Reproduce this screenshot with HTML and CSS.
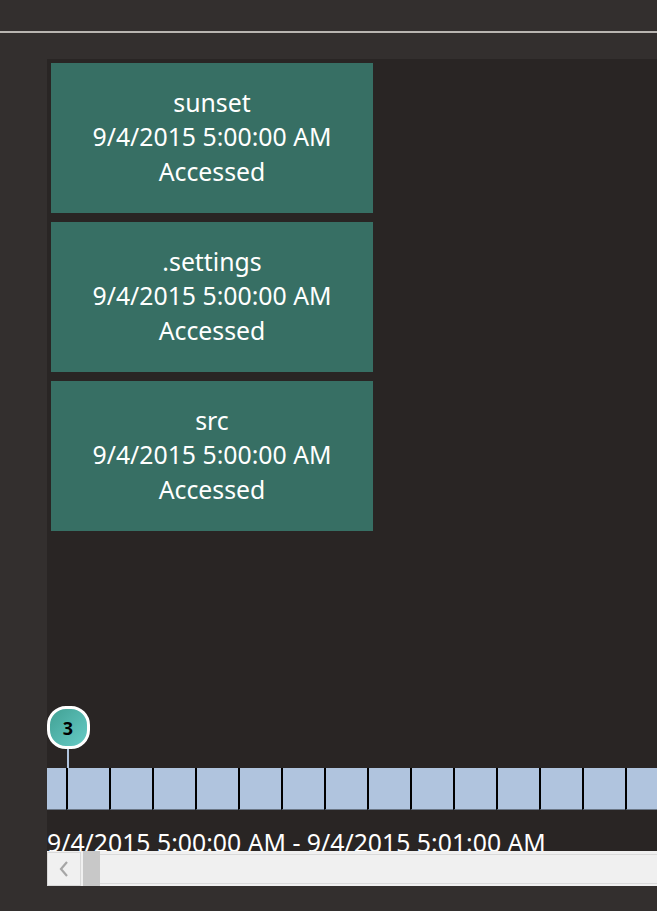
FILE: index.html
```html
<!DOCTYPE html>
<html>
<head>
<meta charset="utf-8">
<link rel="stylesheet" href="styles.css">
</head>
<body>
<div class="topbar"></div>
<div class="rule"></div>
<div class="panel">
  <div class="cards">
    <div class="card"><div>sunset</div><div>9/4/2015 5:00:00 AM</div><div>Accessed</div></div>
    <div class="card"><div>.settings</div><div>9/4/2015 5:00:00 AM</div><div>Accessed</div></div>
    <div class="card"><div>src</div><div>9/4/2015 5:00:00 AM</div><div>Accessed</div></div>
  </div>
  <div class="timeline">
    <div class="marker-wrap">
      <div class="marker"><span>3</span></div>
      <div class="stem"></div>
    </div>
    <div class="ticks">
      <div class="tick first"></div>
      <div class="tick"></div><div class="tick"></div><div class="tick"></div><div class="tick"></div>
      <div class="tick"></div><div class="tick"></div><div class="tick"></div><div class="tick"></div>
      <div class="tick"></div><div class="tick"></div><div class="tick"></div><div class="tick"></div>
      <div class="tick"></div><div class="tick"></div>
    </div>
    <div class="range">9/4/2015 5:00:00 AM - 9/4/2015 5:01:00 AM</div>
    <div class="scrollbar">
      <div class="sb-btn"><svg width="14" height="18" viewBox="0 0 14 18"><path d="M10 2 L4 9 L10 16" fill="none" stroke="#a6a6a6" stroke-width="2.2"/></svg></div>
      <div class="sb-thumb"></div>
      <div class="sb-track"></div>
    </div>
  </div>
</div>
</body>
</html>
```
FILE: styles.css
```css
html, body {
  margin: 0;
  padding: 0;
}
body {
  width: 657px;
  height: 911px;
  overflow: hidden;
  background: #332f2e;
  font-family: "Noto Sans", "Open Sans", sans-serif;
  color: #ffffff;
}
.topbar {
  height: 31px;
}
.rule {
  height: 2px;
  background: #b9b5b1;
}
.panel {
  margin-top: 26px;
  margin-left: 47px;
  height: 827px;
  background: #292524;
  display: flex;
  flex-direction: column;
  overflow: hidden;
}
.cards {
  display: flex;
  flex-direction: column;
  gap: 9px;
  padding: 4px 0 0 4px;
}
.card {
  width: 322px;
  height: 150px;
  background: #376f64;
  display: flex;
  flex-direction: column;
  align-items: center;
  justify-content: center;
  font-size: 24.8px;
  line-height: 34.5px;
  padding-bottom: 3px;
  box-sizing: border-box;
}
.timeline {
  margin-top: auto;
  display: flex;
  flex-direction: column;
}
.marker-wrap {
  display: flex;
  flex-direction: column;
  align-items: center;
  width: 42px;
}
.marker {
  width: 43px;
  height: 43px;
  box-sizing: border-box;
  border: 3px solid #ffffff;
  border-radius: 19px;
  background: linear-gradient(135deg, #41a194, #66cbc6);
  display: flex;
  align-items: center;
  justify-content: center;
  color: #000;
  font-weight: 700;
  font-size: 18px;
}
.stem {
  width: 2px;
  height: 19px;
  background: #b0c4de;
}
.ticks {
  display: flex;
  height: 42px;
}
.tick {
  flex: 0 0 43px;
  height: 42px;
  box-sizing: border-box;
  background: #b0c4de;
  border-left: 2px solid #000;
  border-bottom: 1px solid #6a7686;
}
.tick.first {
  flex-basis: 19px;
  border-left: none;
}
.range {
  height: 42px;
  overflow: hidden;
  font-size: 24.8px;
  line-height: 32px;
  padding-top: 16px;
  box-sizing: border-box;
  white-space: nowrap;
}
.scrollbar {
  height: 35px;
  background: #f0f0f0;
  display: flex;
  margin-top: -1px;
}
.sb-btn {
  width: 34px;
  height: 34px;
  margin-top: 1px;
  box-sizing: border-box;
  border: 1px solid #d9d9d9;
  display: flex;
  align-items: center;
  justify-content: center;
}
.sb-thumb {
  width: 17px;
  margin-left: 2px;
  background: #c8c8c8;
}
.sb-track {
  flex: 1;
  margin: 3px 0 2px;
  border-top: 1px solid #dadada;
  border-bottom: 1px solid #dadada;
}
```
